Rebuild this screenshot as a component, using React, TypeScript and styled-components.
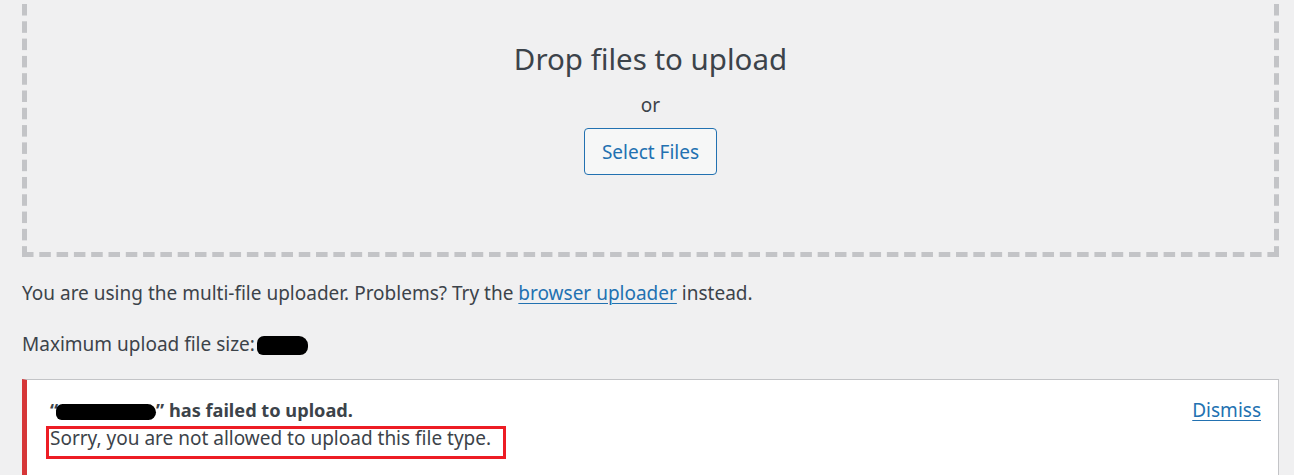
import React from "react";
import styled, { createGlobalStyle } from "styled-components";

const GlobalStyle = createGlobalStyle`
  html, body {
    margin: 0;
    padding: 0;
    overflow: hidden;
    background: #f0f0f1;
  }
  body {
    font-family: "Noto Sans", "Open Sans", sans-serif;
    color: #3c434a;
    font-size: 19px;
    line-height: 26px;
  }
`;

const Page = styled.div`
  padding: 0 15px 0 22px;
`;

const DASH = "#c3c4c7";

const DropZone = styled.div`
  display: flex;
  flex-direction: column;
  align-items: center;
  padding: 41px 5px 82px;
  background:
    linear-gradient(${DASH} 0 11.6px, transparent 11.6px) left 0 top 4px / 5px 17.3px repeat-y,
    linear-gradient(${DASH} 0 11.6px, transparent 11.6px) right 0 top 4px / 5px 17.3px repeat-y,
    linear-gradient(to right, ${DASH} 0 11.6px, transparent 11.6px) left 0 bottom 0 / 17.3px 5px repeat-x;
`;

const DropTitle = styled.h2`
  margin: 0;
  font-size: 29.5px;
  line-height: 36px;
  font-weight: 400;
  color: #3c434a;
`;

const Or = styled.p`
  margin: 15px 0 0;
  font-size: 19px;
  line-height: 26px;
`;

const SelectButton = styled.button`
  margin-top: 10px;
  display: inline-flex;
  align-items: center;
  box-sizing: border-box;
  height: 47px;
  padding: 0 17px;
  border: 1px solid #2271b1;
  border-radius: 4px;
  background: #f6f7f7;
  color: #2271b1;
  font-family: inherit;
  font-size: 19px;
  line-height: 26px;
  cursor: pointer;
`;

const Info = styled.p<{ $gap: number }>`
  margin: ${(p) => p.$gap}px 0 0;
  font-size: 19px;
  line-height: 26px;
`;

const Link = styled.a`
  color: #2271b1;
  text-decoration: underline;
  text-underline-offset: 3px;
  text-decoration-thickness: 1px;
`;

const Redaction = styled.span<{ $w: number; $h: number }>`
  display: inline-block;
  width: ${(p) => p.$w}px;
  height: ${(p) => p.$h}px;
  background: #000;
  border-radius: 7px 9px 8px 6px;
  vertical-align: middle;
`;

const Notice = styled.div`
  margin-top: 22px;
  display: flex;
  justify-content: space-between;
  align-items: flex-start;
  background: #fff;
  border: 1px solid #c3c4c7;
  border-left: 5px solid #d63638;
  padding: 17px 17px 40px 19px;
`;

const NoticeBody = styled.div`
  display: flex;
  flex-direction: column;
  align-items: flex-start;
`;

const FailTitle = styled.strong`
  padding-left: 4px;
  font-size: 18.2px;
  line-height: 26px;
  font-weight: 700;
  color: #3c434a;
`;

const ErrorFrame = styled.span`
  margin-top: 3px;
  display: inline-block;
  border: 3px solid #ed1c24;
  padding: 0 12px 9px 1px;
  font-size: 19px;
  line-height: 18px;
`;

const Dismiss = styled.a`
  color: #2271b1;
  font-size: 19px;
  line-height: 26px;
  text-decoration: underline;
  text-underline-offset: 3px;
  cursor: pointer;
`;

export default function App() {
  return (
    <>
      <GlobalStyle />
      <Page>
        <DropZone>
          <DropTitle>Drop files to upload</DropTitle>
          <Or>or</Or>
          <SelectButton type="button">Select Files</SelectButton>
        </DropZone>
        <Info $gap={23}>
          You are using the multi-file uploader. Problems? Try the{" "}
          <Link href="#">browser uploader</Link> instead.
        </Info>
        <Info $gap={25}>
          Maximum upload file size:
          <Redaction $w={51} $h={19} style={{ marginLeft: 2 }} />
        </Info>
        <Notice>
          <NoticeBody>
            <FailTitle>
              “<Redaction $w={100} $h={16} style={{ marginLeft: -2 }} />” has failed to upload.
            </FailTitle>
            <ErrorFrame>Sorry, you are not allowed to upload this file type.</ErrorFrame>
          </NoticeBody>
          <Dismiss href="#">Dismiss</Dismiss>
        </Notice>
      </Page>
    </>
  );
}
